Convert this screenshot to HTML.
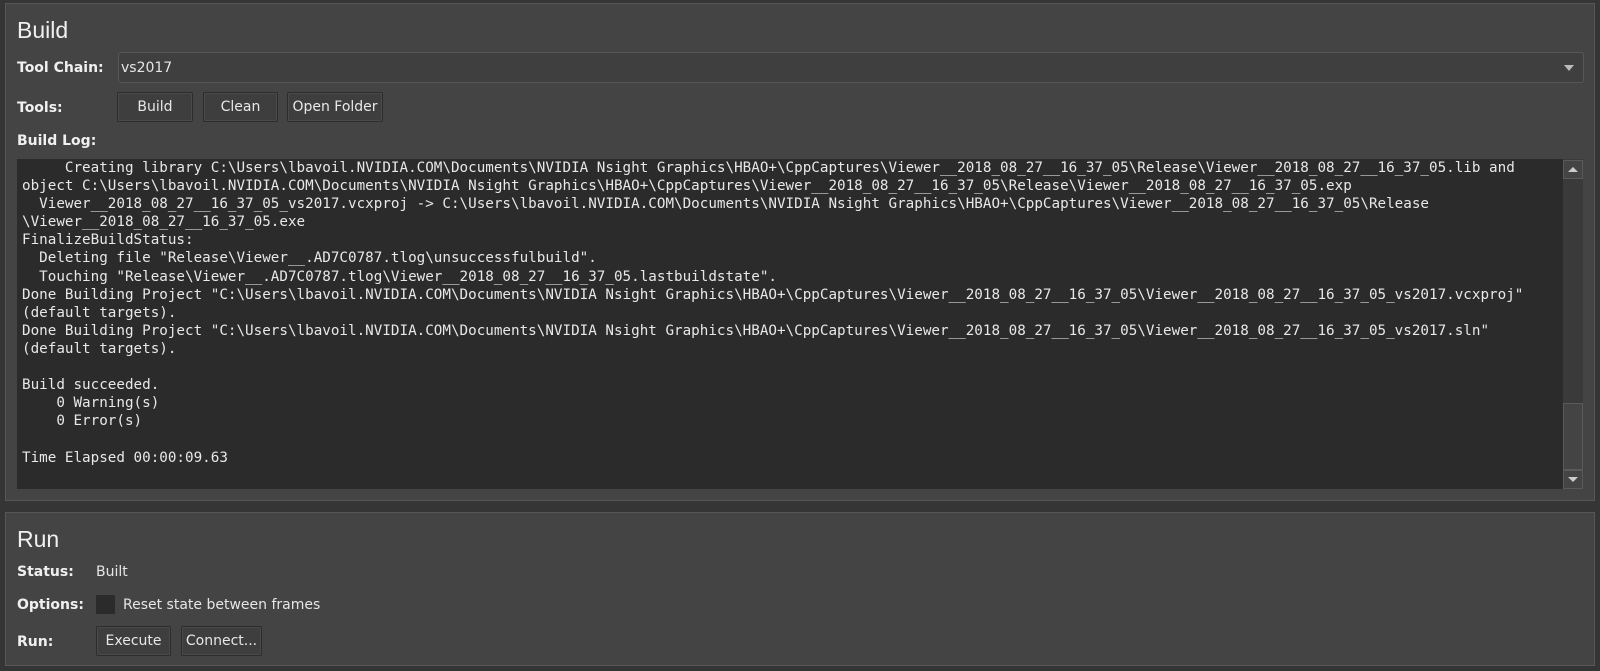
<!DOCTYPE html>
<html><head><style>
html,body{margin:0;padding:0;background:#353535;width:1600px;height:671px;overflow:hidden;font-family:"DejaVu Sans",sans-serif;color:#e6e6e6;font-size:14px}
.panel{position:absolute;background:#444;border:1px solid #575757;box-sizing:border-box}
.title{position:absolute;font-family:"Liberation Sans",sans-serif;font-size:23px;line-height:26px;color:#f0f0f0}
.t{position:absolute;line-height:18px}
.lbl{position:absolute;font-weight:bold;font-size:14px;line-height:18px;color:#f0f0f0}
.btn{position:absolute;background:#3e3e3e;border:1px solid #2c2c2c;box-shadow:inset 0 0 0 1px #4a4a4a;border-radius:2px;box-sizing:border-box;text-align:center;font-size:14px;color:#e8e8e8;white-space:nowrap}
.log{position:absolute;left:17px;top:159px;width:1566px;height:330px;background:#2b2b2b;box-sizing:border-box}
.log pre{margin:0;position:absolute;left:5px;top:0px;font-family:"DejaVu Sans Mono","Liberation Mono",monospace;font-size:14.25px;line-height:18.1px;color:#e8e8e8}
</style></head><body>
<div class="panel" style="left:5px;top:3px;width:1590px;height:498px"></div>
<div class="title" style="left:17px;top:17px">Build</div>
<div class="lbl" style="left:17px;top:59px">Tool Chain:</div>
<div style="position:absolute;left:118px;top:52px;width:1466px;height:31px;background:#3f3f3f;border:1px solid #575757;border-radius:3px;box-sizing:border-box"></div>
<div class="t" style="left:121px;top:59px">vs2017</div>
<div style="position:absolute;left:1564px;top:65px;width:0;height:0;border-left:5px solid transparent;border-right:5px solid transparent;border-top:6px solid #bbb"></div>
<div class="lbl" style="left:17px;top:99px">Tools:</div>
<div class="btn" style="left:117px;top:92px;width:76px;height:30px;line-height:28px">Build</div>
<div class="btn" style="left:203px;top:92px;width:75px;height:30px;line-height:28px">Clean</div>
<div class="btn" style="left:287px;top:92px;width:96px;height:30px;line-height:28px">Open Folder</div>
<div class="lbl" style="left:17px;top:132px">Build Log:</div>
<div class="log"><pre>     Creating library C:\Users\lbavoil.NVIDIA.COM\Documents\NVIDIA Nsight Graphics\HBAO+\CppCaptures\Viewer__2018_08_27__16_37_05\Release\Viewer__2018_08_27__16_37_05.lib and
object C:\Users\lbavoil.NVIDIA.COM\Documents\NVIDIA Nsight Graphics\HBAO+\CppCaptures\Viewer__2018_08_27__16_37_05\Release\Viewer__2018_08_27__16_37_05.exp
  Viewer__2018_08_27__16_37_05_vs2017.vcxproj -&gt; C:\Users\lbavoil.NVIDIA.COM\Documents\NVIDIA Nsight Graphics\HBAO+\CppCaptures\Viewer__2018_08_27__16_37_05\Release
\Viewer__2018_08_27__16_37_05.exe
FinalizeBuildStatus:
  Deleting file "Release\Viewer__.AD7C0787.tlog\unsuccessfulbuild".
  Touching "Release\Viewer__.AD7C0787.tlog\Viewer__2018_08_27__16_37_05.lastbuildstate".
Done Building Project "C:\Users\lbavoil.NVIDIA.COM\Documents\NVIDIA Nsight Graphics\HBAO+\CppCaptures\Viewer__2018_08_27__16_37_05\Viewer__2018_08_27__16_37_05_vs2017.vcxproj"
(default targets).
Done Building Project "C:\Users\lbavoil.NVIDIA.COM\Documents\NVIDIA Nsight Graphics\HBAO+\CppCaptures\Viewer__2018_08_27__16_37_05\Viewer__2018_08_27__16_37_05_vs2017.sln"
(default targets).

Build succeeded.
    0 Warning(s)
    0 Error(s)

Time Elapsed 00:00:09.63</pre>
<div style="position:absolute;left:1546px;top:0;width:20px;height:330px;background:#3a3a3a"></div>
<div style="position:absolute;left:1546px;top:1px;width:20px;height:19px;background:#444;border:1px solid #5a5a5a;box-sizing:border-box"></div>
<div style="position:absolute;left:1551px;top:8px;border-left:5px solid transparent;border-right:5px solid transparent;border-bottom:5px solid #ccc"></div>
<div style="position:absolute;left:1546px;top:244px;width:20px;height:67px;background:#444;border:1px solid #5a5a5a;box-sizing:border-box"></div>
<div style="position:absolute;left:1546px;top:311px;width:20px;height:19px;background:#444;border:1px solid #5a5a5a;box-sizing:border-box"></div>
<div style="position:absolute;left:1551px;top:318px;border-left:5px solid transparent;border-right:5px solid transparent;border-top:5px solid #ccc"></div>
</div>
<div class="panel" style="left:5px;top:512px;width:1590px;height:154px"></div>
<div class="title" style="left:17px;top:526px">Run</div>
<div class="lbl" style="left:17px;top:563px">Status:</div>
<div class="t" style="left:96px;top:563px">Built</div>
<div class="lbl" style="left:17px;top:596px">Options:</div>
<div style="position:absolute;left:96px;top:595px;width:19px;height:19px;background:#2b2b2b"></div>
<div class="t" style="left:123px;top:596px">Reset state between frames</div>
<div class="lbl" style="left:17px;top:633px">Run:</div>
<div class="btn" style="left:96px;top:626px;width:75px;height:30px;line-height:28px">Execute</div>
<div class="btn" style="left:181px;top:626px;width:81px;height:30px;line-height:28px">Connect...</div>
</body></html>
